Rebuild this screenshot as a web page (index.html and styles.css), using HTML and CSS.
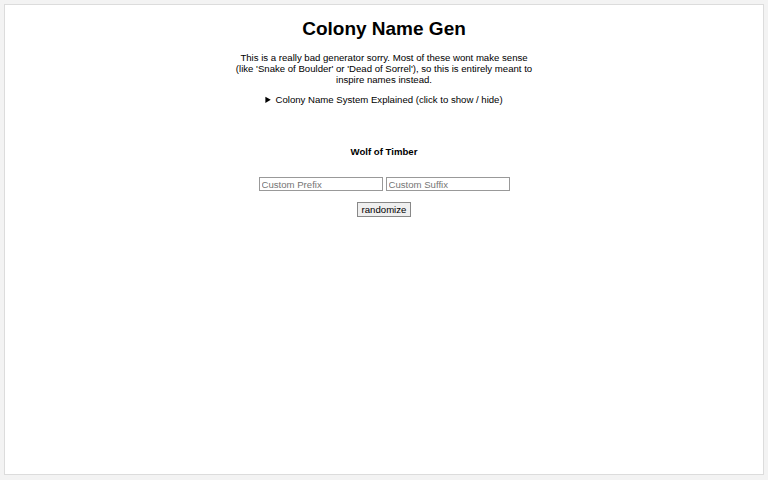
FILE: index.html
```html
<!DOCTYPE html>
<html lang="en">
<head>
  <meta charset="UTF-8" />
  <title>Colony Name Gen</title>
  <link rel="stylesheet" href="styles.css">
</head>
<body>

  <main class="page">
    <h1>Colony Name Gen</h1>
    <p class="intro">This is a really bad generator sorry. Most of these wont make sense (like 'Snake of Boulder' or 'Dead of Sorrel'), so this is entirely meant to inspire names instead.</p>

    <details class="explain">
      <summary>Colony Name System Explained (click to show / hide)</summary>
      <p>Colony names are made of a prefix and a suffix joined by "of".</p>
    </details>

    <div class="result" id="result">Wolf of Timber</div>

    <div class="custom">
      <input type="text" id="prefix" placeholder="Custom Prefix" /><input type="text" id="suffix" placeholder="Custom Suffix" />
    </div>

    <button id="randomize">randomize</button>
  </main>

  <script>
    const prefixes = ["Wolf", "Snake", "Dead", "River", "Storm", "Hawk", "Moss", "Stone"];
    const suffixes = ["Timber", "Boulder", "Sorrel", "Thorns", "Ash", "Hollow", "Pines", "Shadows"];

    function pick(list) {
      return list[Math.floor(Math.random() * list.length)];
    }

    document.getElementById("randomize").addEventListener("click", () => {
      const pre = document.getElementById("prefix").value.trim() || pick(prefixes);
      const suf = document.getElementById("suffix").value.trim() || pick(suffixes);
      document.getElementById("result").textContent = pre + " of " + suf;
    });
  </script>

</body>
</html>
```

FILE: styles.css
```css
body {
  margin: 0;
  padding: 4px 4px 5px;
  background-color: #f3f3f3;
  font-family: 'Liberation Sans', Arial, sans-serif;
  color: #000;
}
.page {
  background: #fff;
  border: 1px solid #dcdcdc;
  height: 471px;
  box-sizing: border-box;
  text-align: center;
  padding-top: 13px;
}
h1 {
  font-size: 19px;
  line-height: 22px;
  margin: 0 0 12px;
}
.intro {
  font-size: 9.6px;
  line-height: 11px;
  max-width: 300px;
  margin: 0 auto 9px;
}
.explain {
  font-size: 9.6px;
  line-height: 12px;
}
.explain summary {
  cursor: pointer;
}
.explain p {
  margin: 6px 0;
}
.result {
  font-size: 9.6px;
  font-weight: bold;
  margin-top: 40px;
}
.custom {
  margin-top: 20px;
  display: flex;
  justify-content: center;
  gap: 3px;
}
.custom input {
  font-family: inherit;
  font-size: 9.6px;
  width: 124px;
  height: 14px;
  box-sizing: border-box;
  padding: 0 2px;
  border: 1px solid #999;
  margin: 0;
}
button {
  font-family: inherit;
  font-size: 9.6px;
  margin-top: 11px;
  padding: 1px 4px;
  border: 1px solid #888;
  background: #efefef;
}
```
